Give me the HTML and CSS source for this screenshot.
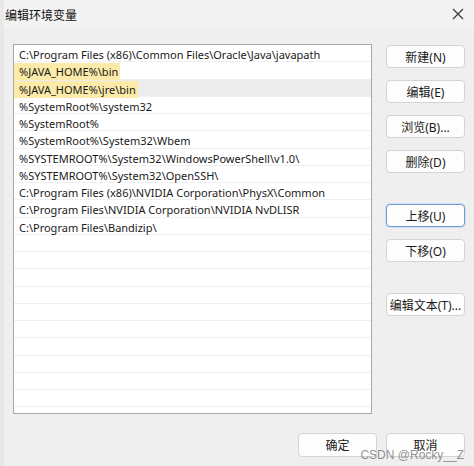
FILE: index.html
```html
<!DOCTYPE html>
<html>

<head>
    <title>编辑环境变量</title>
    <link rel="stylesheet" href="styles.css">
</head>

<body>
    <div class="dialog">
        <div class="titlebar">
            <span class="title">编辑环境变量</span>
            <span class="close">
                <svg width="12" height="12" viewBox="0 0 12 12">
                    <path d="M1 1 L11 11 M11 1 L1 11" stroke="#333" stroke-width="1.1" fill="none" />
                </svg>
            </span>
        </div>

        <div class="content">
            <div class="list">
                <div class="row">C:\Program Files (x86)\Common Files\Oracle\Java\javapath</div>
                <div class="row"><span class="mark">%JAVA_HOME%\bin</span></div>
                <div class="row hover"><span class="mark">%JAVA_HOME%\jre\bin</span></div>
                <div class="row">%SystemRoot%\system32</div>
                <div class="row">%SystemRoot%</div>
                <div class="row">%SystemRoot%\System32\Wbem</div>
                <div class="row">%SYSTEMROOT%\System32\WindowsPowerShell\v1.0\</div>
                <div class="row">%SYSTEMROOT%\System32\OpenSSH\</div>
                <div class="row">C:\Program Files (x86)\NVIDIA Corporation\PhysX\Common</div>
                <div class="row">C:\Program Files\NVIDIA Corporation\NVIDIA NvDLISR</div>
                <div class="row">C:\Program Files\Bandizip\</div>
                <div class="row"></div>
                <div class="row"></div>
                <div class="row"></div>
                <div class="row"></div>
                <div class="row"></div>
                <div class="row"></div>
                <div class="row"></div>
                <div class="row"></div>
                <div class="row"></div>
                <div class="row"></div>
                <div class="row"></div>
            </div>

            <div class="side">
                <button class="btn">新建(N)</button>
                <button class="btn">编辑(E)</button>
                <button class="btn">浏览(B)...</button>
                <button class="btn">删除(D)</button>
                <button class="btn focus group">上移(U)</button>
                <button class="btn">下移(O)</button>
                <button class="btn group">编辑文本(T)...</button>
            </div>
        </div>

        <div class="footer">
            <button class="btn">确定</button>
            <button class="btn">取消</button>
        </div>

        <span class="watermark">CSDN @Rocky__Z</span>
    </div>
</body>

</html>
```

FILE: styles.css
```css
* {
    box-sizing: border-box;
}

body {
    margin: 0;
    font-family: "Noto Sans", "Noto Sans CJK SC", sans-serif;
    font-size: 12px;
    color: #1a1a1a;
}

.dialog {
    position: relative;
    width: 474px;
    height: 466px;
    background-color: #efefef;
    border-left: 4px solid #e8e8e8;
    overflow: hidden;
}

.titlebar {
    display: flex;
    align-items: center;
    justify-content: space-between;
    height: 28px;
    padding: 0 10px 0 1px;
    background-color: #f3f3f3;
}

.title {
    font-family: "Noto Sans CJK SC", sans-serif;
    font-size: 12px;
    color: #111;
}

.close {
    display: flex;
}

.content {
    display: flex;
    padding: 16px 0 0 9px;
}

.list {
    width: 359px;
    height: 370px;
    background-color: #fff;
    border: 1px solid #a8a8a8;
    overflow: hidden;
}

/* list entries: narrower text so long paths fit like the native control */
.row {
    height: 17.25px;
    line-height: 19px;
    padding-left: 5px;
    font-size: 11px;
    border-bottom: 1px solid #f0f0f0;
    white-space: nowrap;
}

.row.hover {
    background-color: #ececec;
}

.mark {
    background-color: #fbeaa8;
    padding: 1px 2px 1px 5px;
    margin-left: -5px;
}

.side {
    display: flex;
    flex-direction: column;
    margin-left: 14px;
    padding-top: 1px;
}

.btn {
    width: 79px;
    height: 23px;
    margin-bottom: 12px;
    padding: 0;
    font-family: "Noto Sans", "Noto Sans CJK SC", sans-serif;
    font-size: 12px;
    color: #1a1a1a;
    background-color: #fdfdfd;
    border: 1px solid #d4d4d4;
    border-radius: 4px;
}

.btn.group {
    margin-top: 19px;
}

.btn.focus {
    border-color: #6e9ed0;
    box-shadow: 0 0 0 1px #cfe0f3;
}

.footer {
    display: flex;
    justify-content: flex-end;
    gap: 9px;
    padding: 19px 9px 0 0;
}

.footer .btn {
    height: 24px;
    margin: 0;
}

.watermark {
    position: absolute;
    right: 10px;
    bottom: 4px;
    font-family: "Liberation Sans", sans-serif;
    font-size: 12px;
    color: rgba(110, 110, 110, 0.75);
}
```
